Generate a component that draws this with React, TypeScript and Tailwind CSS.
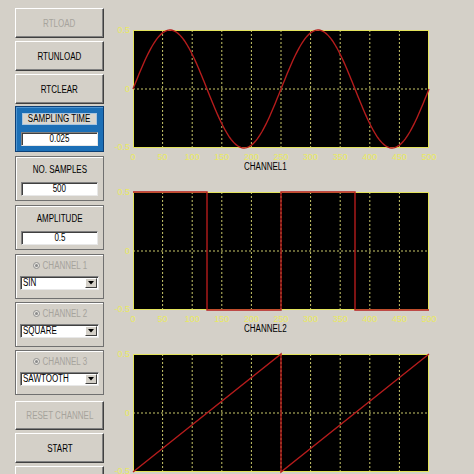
import React from "react";

const W = 296;
const H = 118;
const L = 23;
const T = 6;
const px = (t: number) => L + (t / 500) * W;
const py = (v: number) => T + H / 2 - v * H;

function sinePath() {
  const pts: string[] = [];
  for (let t = 0; t <= 500; t += 2) {
    const v = 0.5 * Math.sin((2 * Math.PI * t) / 250);
    pts.push(`${pts.length ? "L" : "M"}${px(t).toFixed(2)},${py(v).toFixed(2)}`);
  }
  return pts.join(" ");
}

function N({ children, left }: { children: React.ReactNode; left?: boolean }) {
  return (
    <span className={`inline-block whitespace-nowrap scale-x-[0.8] ${left ? "origin-left" : "origin-center"}`}>
      {children}
    </span>
  );
}

function Plot({ kind, label, showX = true }: { kind: "sin" | "square" | "saw"; label: string; showX?: boolean }) {
  let d = "";
  if (kind === "sin") d = sinePath();
  if (kind === "square")
    d = `M${px(0)},${py(0.5)} L${px(125)},${py(0.5)} L${px(125)},${py(-0.5)} L${px(250)},${py(-0.5)} L${px(250)},${py(0.5)} L${px(375)},${py(0.5)} L${px(375)},${py(-0.5)} L${px(500)},${py(-0.5)}`;
  if (kind === "saw")
    d = `M${px(0)},${py(-0.5)} L${px(250)},${py(0.5)} L${px(250)},${py(-0.5)} L${px(500)},${py(0.5)}`;
  const ticks = Array.from({ length: 11 }, (_, i) => i * 50);
  return (
    <div className="h-[162px] shrink-0 flex flex-col">
      <svg width={364} height={138} className="block shrink-0">
        <rect x={L} y={T} width={W} height={H} fill="#000" />
        {ticks.slice(1, 10).map((t) => (
          <line
            key={t}
            x1={px(t)}
            x2={px(t)}
            y1={T}
            y2={T + H}
            stroke="#c9c86a"
            strokeWidth={1}
            strokeDasharray="2 2"
          />
        ))}
        <line
          x1={L}
          x2={L + W}
          y1={T + H / 2}
          y2={T + H / 2}
          stroke="#c9c86a"
          strokeWidth={1}
          strokeDasharray="2 2"
        />
        <rect x={L + 0.5} y={T + 0.5} width={W - 1} height={H - 1} fill="none" stroke="#e4e45c" strokeWidth={1} />
        <path d={d} fill="none" stroke="#b51c1c" strokeWidth={1.4} />
        <g fill="#eaea62" fontSize={9} fontFamily="Liberation Sans, sans-serif">
          <text x={L - 3} y={T + 3} textAnchor="end">0.5</text>
          <text x={L - 3} y={T + H / 2 + 3} textAnchor="end">0</text>
          <text x={L - 3} y={T + H + 2} textAnchor="end">-0.5</text>
          {showX &&
            ticks.map((t) => (
              <text key={t} x={px(t)} y={T + H + 12} textAnchor="middle">
                {t}
              </text>
            ))}
        </g>
      </svg>
      {showX && (
        <div className="h-[10px] leading-[10px] pl-[134px] text-[10px] text-black">
          <N left>{label}</N>
        </div>
      )}
    </div>
  );
}

function Btn({ children, disabled, h = "h-[30px]" }: { children?: React.ReactNode; disabled?: boolean; h?: string }) {
  return (
    <div
      className={`${h} shrink-0 flex items-center justify-center bg-[#d4d0c8] border border-t-white border-l-white border-r-[#404040] border-b-[#404040] shadow-[inset_-1px_-1px_0_#808080] text-[10px] ${
        disabled ? "text-[#a6a39c]" : "text-black"
      }`}
    >
      {children && <N>{children}</N>}
    </div>
  );
}

function Input({ value }: { value: string }) {
  return (
    <div className="h-[14px] shrink-0 mx-[5px] flex items-center justify-center bg-white border border-t-[#808080] border-l-[#808080] border-b-[#e8e8e8] border-r-[#e8e8e8] shadow-[inset_1px_1px_0_#404040] text-[10px] text-black leading-none">
      <N>{value}</N>
    </div>
  );
}

function ValuePanel({ label, value, mt }: { label: string; value: string; mt: string }) {
  return (
    <div className={`${mt} h-[45px] shrink-0 flex flex-col border border-[#707070] shadow-[inset_1px_1px_0_#fff] bg-[#d4d0c8]`}>
      <div className="h-[25px] flex items-center justify-center text-[10px] text-black">
        <N>{label}</N>
      </div>
      <Input value={value} />
    </div>
  );
}

function ChannelPanel({ n, value, mt }: { n: number; value: string; mt: string }) {
  return (
    <div className={`${mt} h-[45px] shrink-0 flex flex-col border border-[#707070] shadow-[inset_1px_1px_0_#fff] bg-[#d4d0c8]`}>
      <div className="h-[21px] flex items-center justify-center gap-[3px] text-[10px] text-[#a6a39c]">
        <span className="w-[7px] h-[7px] rounded-full border border-[#909090] bg-[#e8e6e0] flex items-center justify-center">
          <span className="w-[3px] h-[3px] rounded-full bg-[#8a8a8a]" />
        </span>
        <span className="w-[44px] flex justify-center">
          <N>CHANNEL {n}</N>
        </span>
      </div>
      <div className="h-[14px] mx-[4px] flex items-stretch bg-white border border-t-[#808080] border-l-[#808080] border-b-[#e8e8e8] border-r-[#e8e8e8] shadow-[inset_1px_1px_0_#404040]">
        <div className="flex-1 flex items-center pl-[2px] text-[10px] text-black leading-none">
          <N left>{value}</N>
        </div>
        <div className="w-[12px] my-[1px] mr-[1px] bg-[#d4d0c8] border border-t-white border-l-white border-r-[#404040] border-b-[#404040] flex items-center justify-center">
          <svg width="6" height="4" viewBox="0 0 6 4">
            <path d="M0,0 L6,0 L3,3.5 Z" fill="#000" />
          </svg>
        </div>
      </div>
    </div>
  );
}

export default function App() {
  return (
    <div className="w-[474px] h-[474px] overflow-hidden bg-[#d4d0c8] flex font-['Liberation_Sans',Arial,sans-serif]">
      <div className="w-[110px] shrink-0 pl-[15px] pr-[6px] pt-[8px] flex flex-col">
        <Btn disabled>RTLOAD</Btn>
        <div className="mt-[3px] shrink-0">
          <Btn>RTUNLOAD</Btn>
        </div>
        <div className="mt-[3px] shrink-0">
          <Btn>RTCLEAR</Btn>
        </div>
        <div className="mt-[2px] h-[46px] shrink-0 flex flex-col bg-[#1c6fb6] border border-[#0d3f75] shadow-[inset_1px_1px_0_#4f94d0]">
          <div className="mt-[6px] mx-[6px] h-[12px] flex items-center justify-center bg-[#d8d5ce] border border-[#a8c4de] text-[10px] text-black leading-none">
            <N>SAMPLING TIME</N>
          </div>
          <div className="mt-[7px]">
            <Input value="0.025" />
          </div>
        </div>
        <ValuePanel mt="mt-[4px]" label="NO. SAMPLES" value="500" />
        <ValuePanel mt="mt-[4px]" label="AMPLITUDE" value="0.5" />
        <ChannelPanel mt="mt-[4px]" n={1} value="SIN" />
        <ChannelPanel mt="mt-[3px]" n={2} value="SQUARE" />
        <ChannelPanel mt="mt-[3px]" n={3} value="SAWTOOTH" />
        <div className="mt-[6px] shrink-0">
          <Btn disabled h="h-[29px]">RESET CHANNEL</Btn>
        </div>
        <div className="mt-[3px] shrink-0">
          <Btn>START</Btn>
        </div>
        <div className="mt-[3px] shrink-0">
          <Btn />
        </div>
      </div>
      <div className="flex-1 pt-[24px] flex flex-col">
        <Plot kind="sin" label="CHANNEL1" />
        <Plot kind="square" label="CHANNEL2" />
        <Plot kind="saw" label="CHANNEL3" showX={false} />
      </div>
    </div>
  );
}
